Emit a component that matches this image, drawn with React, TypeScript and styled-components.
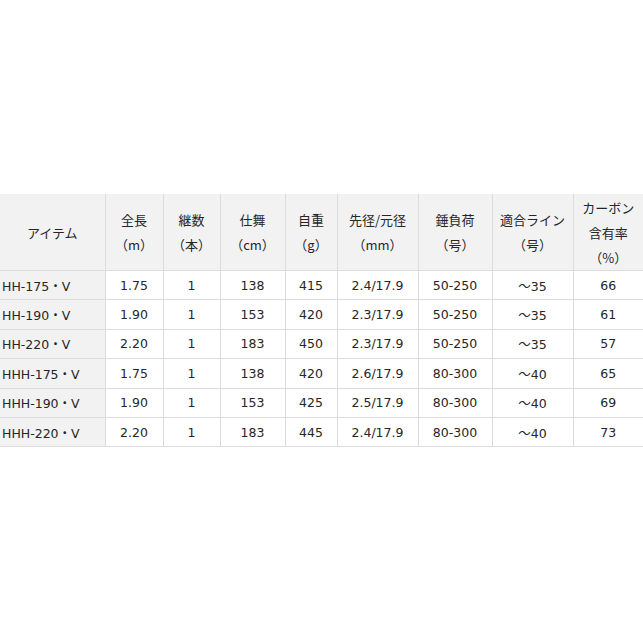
import React from "react"
import styled, { createGlobalStyle } from "styled-components"

interface Spec {
	item: string
	length: string
	pieces: string
	closed: string
	weight: string
	diameter: string
	sinker: string
	line: string
	carbon: string
}

const specs: Spec[] = [
	{ item: "HH-175・V", length: "1.75", pieces: "1", closed: "138", weight: "415", diameter: "2.4/17.9", sinker: "50-250", line: "～35", carbon: "66" },
	{ item: "HH-190・V", length: "1.90", pieces: "1", closed: "153", weight: "420", diameter: "2.3/17.9", sinker: "50-250", line: "～35", carbon: "61" },
	{ item: "HH-220・V", length: "2.20", pieces: "1", closed: "183", weight: "450", diameter: "2.3/17.9", sinker: "50-250", line: "～35", carbon: "57" },
	{ item: "HHH-175・V", length: "1.75", pieces: "1", closed: "138", weight: "420", diameter: "2.6/17.9", sinker: "80-300", line: "～40", carbon: "65" },
	{ item: "HHH-190・V", length: "1.90", pieces: "1", closed: "153", weight: "425", diameter: "2.5/17.9", sinker: "80-300", line: "～40", carbon: "69" },
	{ item: "HHH-220・V", length: "2.20", pieces: "1", closed: "183", weight: "445", diameter: "2.4/17.9", sinker: "80-300", line: "～40", carbon: "73" }
]

const headers: string[][] = [
	["全長", "（m）"],
	["継数", "（本）"],
	["仕舞", "（cm）"],
	["自重", "（g）"],
	["先径/元径", "（mm）"],
	["錘負荷", "（号）"],
	["適合ライン", "（号）"],
	["カーボン", "含有率", "（%）"]
]

const widths = [105, 58, 57, 65, 52, 81, 74, 81, 70]

export default function App() {
	return (
		<>
			<GlobalStyle />
			<Page>
				<SpecTable>
					<colgroup>
						{widths.map((w, i) => (
							<col key={i} style={{ width: w }} />
						))}
					</colgroup>
					<thead>
						<tr>
							<HeadCell $first>アイテム</HeadCell>
							{headers.map((lines, i) => (
								<HeadCell key={i}>
									{lines.map((l, j) => (
										<HeadLine key={j}>{l}</HeadLine>
									))}
								</HeadCell>
							))}
						</tr>
					</thead>
					<tbody>
						{specs.map((s) => (
							<Row key={s.item}>
								<ItemCell>{s.item}</ItemCell>
								<Cell>{s.length}</Cell>
								<Cell>{s.pieces}</Cell>
								<Cell>{s.closed}</Cell>
								<Cell>{s.weight}</Cell>
								<Cell>{s.diameter}</Cell>
								<Cell>{s.sinker}</Cell>
								<Cell>{s.line}</Cell>
								<Cell>{s.carbon}</Cell>
							</Row>
						))}
					</tbody>
				</SpecTable>
			</Page>
		</>
	)
}

const GlobalStyle = createGlobalStyle`
	body {
		margin: 0;
		background: #fff;
		font-family: "DejaVu Sans", "Noto Sans CJK JP", sans-serif;
	}
`
const Page = styled.div`
	width: 643px;
	height: 643px;
	padding-top: 194px;
	box-sizing: border-box;
	overflow: hidden;
`
const SpecTable = styled.table`
	width: 643px;
	table-layout: fixed;
	border-collapse: collapse;
	color: #262626;
	font-size: 12.5px;
`
const HeadCell = styled.th<{ $first?: boolean }>`
	height: 76px;
	padding: 0;
	background: #f2f2f2;
	border-left: ${(p) => (p.$first ? "none" : "1px solid #dcdcdc")};
	border-bottom: 1px solid #dcdcdc;
	font-weight: normal;
	font-family: "Noto Sans CJK JP", "DejaVu Sans", sans-serif;
	font-size: 13px;
	text-align: center;
	vertical-align: middle;
`
const HeadLine = styled.div`
	line-height: 25px;
`
const Row = styled.tr`
	height: 29.4px;
`
const Cell = styled.td`
	padding: 0;
	border-left: 1px solid #dcdcdc;
	border-bottom: 1px solid #dcdcdc;
	text-align: center;
	vertical-align: middle;
	white-space: nowrap;
`
const ItemCell = styled(Cell)`
	border-left: none;
	background: #f2f2f2;
	text-align: left;
	padding-left: 2px;
`
